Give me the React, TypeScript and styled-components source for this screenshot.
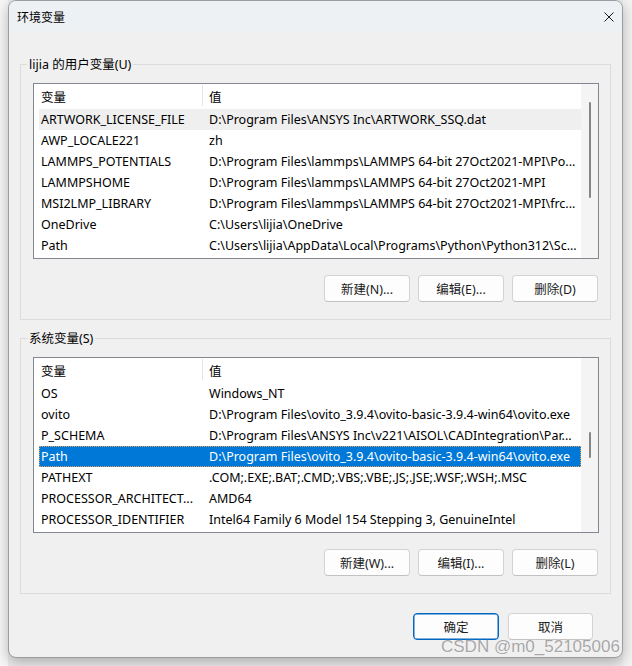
import React from "react";
import styled, { createGlobalStyle } from "styled-components";

const GlobalStyle = createGlobalStyle`
  html, body { margin: 0; padding: 0; }
  body {
    width: 632px;
    height: 666px;
    overflow: hidden;
    background: #ececec;
    font-family: "Noto Sans", "Noto Sans CJK SC", sans-serif;
    font-size: 12.5px;
    color: #000;
  }
  * { box-sizing: border-box; }
`;

const Screen = styled.div`
  position: relative;
  width: 632px;
  height: 666px;
  padding-left: 8px;
  background: linear-gradient(to right, #f7f7f7 0 8px, #ececec 8px 623px, #f3f3f3 623px);
`;

const Dialog = styled.div`
  width: 615px;
  height: 658px;
  display: flex;
  flex-direction: column;
  background: #f0f0f0;
  border: 1px solid #9c9c9c;
  border-radius: 8px;
  overflow: hidden;
  box-shadow: 0 4px 14px rgba(0, 0, 0, 0.28);
`;

const TitleBar = styled.div`
  height: 30px;
  flex: none;
  display: flex;
  align-items: center;
  justify-content: space-between;
  padding: 1px 8px 0 8px;
  background: #eef1f4;
  font-size: 12px;
  color: #000;
`;

const CloseIcon = styled.svg`
  width: 10px;
  height: 10px;
  display: block;
`;

const Body = styled.div`
  flex: 1;
  display: flex;
  flex-direction: column;
  padding: 25px 11px 0 11px;
`;

const Group = styled.fieldset<{ $gap?: number }>`
  margin: ${(p) => p.$gap ?? 0}px 0 0 0;
  padding: 11px 11px 17px 12px;
  border: 1px solid #dcdcdc;
  min-width: 0;
`;

const Legend = styled.legend`
  padding: 1px 2px 0 2px;
  margin-left: -6px;
  line-height: 15px;
  font-size: 12.5px;
  color: #000;
`;

const List = styled.div`
  height: 176px;
  display: flex;
  background: #fff;
  border: 1px solid #828790;
`;

const ListMain = styled.div`
  flex: 1;
  min-width: 0;
  display: flex;
  flex-direction: column;
`;

const Header = styled.div`
  height: 25px;
  flex: none;
  display: grid;
  grid-template-columns: 168px 1fr;
`;

const HeaderCell = styled.div<{ $sep?: boolean }>`
  display: flex;
  align-items: center;
  padding: 1px 0 0 ${(p) => (p.$sep ? 6 : 7)}px;
  margin: 1px 0 3px 0;
  border-left: ${(p) => (p.$sep ? "1px solid #e5e5e5" : "none")};
  white-space: nowrap;
`;

const Row = styled.div<{ $state?: "hover" | "selected" }>`
  height: 21px;
  flex: none;
  margin-left: 5px;
  display: grid;
  grid-template-columns: 163px 1fr;
  background: ${(p) =>
    p.$state === "selected" ? "#0078d7" : p.$state === "hover" ? "#efefef" : "transparent"};
  color: ${(p) => (p.$state === "selected" ? "#fff" : "#000")};
  outline: ${(p) => (p.$state === "selected" ? "1px dotted #e9a25f" : "none")};
  outline-offset: -1px;
`;

const Cell = styled.div<{ $value?: boolean }>`
  padding: 1px 0 0 ${(p) => (p.$value ? 7 : 2)}px;
  white-space: nowrap;
  overflow: hidden;
  line-height: 20px;
`;

const ScrollTrack = styled.div`
  width: 17px;
  flex: none;
  background: #f4f4f4;
  display: flex;
  flex-direction: column;
  align-items: center;
`;

const ScrollThumb = styled.div<{ $top: number; $h: number }>`
  width: 2px;
  margin-top: ${(p) => p.$top}px;
  height: ${(p) => p.$h}px;
  background: #868686;
  border-radius: 1px;
`;

const ButtonRow = styled.div`
  display: flex;
  justify-content: flex-end;
  gap: 8px;
  margin-top: 16px;
  padding-right: 1px;
`;

const Button = styled.button<{ $primary?: boolean; $w?: number }>`
  width: ${(p) => p.$w ?? 86}px;
  height: 27px;
  padding: 0;
  font-family: inherit;
  font-size: 12.5px;
  color: #1b1b1b;
  background: #fdfdfd;
  border: 1px solid ${(p) => (p.$primary ? "#0067c0" : "#d3d3d3")};
  border-bottom-color: ${(p) => (p.$primary ? "#0067c0" : "#c2c2c2")};
  border-radius: 4px;
  box-shadow: ${(p) => (p.$primary ? "inset 0 0 0 0.5px #0067c0" : "none")};
`;

const Footer = styled.div`
  display: flex;
  justify-content: flex-end;
  gap: 9px;
  margin-top: 19px;
  padding-right: 18px;
`;

const Watermark = styled.div`
  position: absolute;
  left: 441px;
  top: 637px;
  font-family: "Liberation Sans", Arial, sans-serif;
  font-size: 17px;
  color: rgba(95, 95, 95, 0.55);
  text-shadow: 0 0 1px rgba(255, 255, 255, 0.8);
  white-space: nowrap;
  pointer-events: none;
`;

type Item = [string, string];

const userVars: Item[] = [
  ["ARTWORK_LICENSE_FILE", "D:\\Program Files\\ANSYS Inc\\ARTWORK_SSQ.dat"],
  ["AWP_LOCALE221", "zh"],
  ["LAMMPS_POTENTIALS", "D:\\Program Files\\lammps\\LAMMPS 64-bit 27Oct2021-MPI\\Po..."],
  ["LAMMPSHOME", "D:\\Program Files\\lammps\\LAMMPS 64-bit 27Oct2021-MPI"],
  ["MSI2LMP_LIBRARY", "D:\\Program Files\\lammps\\LAMMPS 64-bit 27Oct2021-MPI\\frc..."],
  ["OneDrive", "C:\\Users\\lijia\\OneDrive"],
  ["Path", "C:\\Users\\lijia\\AppData\\Local\\Programs\\Python\\Python312\\Sc..."],
];

const sysVars: Item[] = [
  ["OS", "Windows_NT"],
  ["ovito", "D:\\Program Files\\ovito_3.9.4\\ovito-basic-3.9.4-win64\\ovito.exe"],
  ["P_SCHEMA", "D:\\Program Files\\ANSYS Inc\\v221\\AISOL\\CADIntegration\\Par..."],
  ["Path", "D:\\Program Files\\ovito_3.9.4\\ovito-basic-3.9.4-win64\\ovito.exe"],
  ["PATHEXT", ".COM;.EXE;.BAT;.CMD;.VBS;.VBE;.JS;.JSE;.WSF;.WSH;.MSC"],
  ["PROCESSOR_ARCHITECT...", "AMD64"],
  ["PROCESSOR_IDENTIFIER", "Intel64 Family 6 Model 154 Stepping 3, GenuineIntel"],
];

function VarList({
  items,
  hover,
  selected,
  thumbTop,
  thumbH,
}: {
  items: Item[];
  hover?: number;
  selected?: number;
  thumbTop: number;
  thumbH: number;
}) {
  return (
    <List>
      <ListMain>
        <Header>
          <HeaderCell>变量</HeaderCell>
          <HeaderCell $sep>值</HeaderCell>
        </Header>
        {items.map(([k, v], i) => (
          <Row key={k + i} $state={i === selected ? "selected" : i === hover ? "hover" : undefined}>
            <Cell>{k}</Cell>
            <Cell $value>{v}</Cell>
          </Row>
        ))}
      </ListMain>
      <ScrollTrack>
        <ScrollThumb $top={thumbTop} $h={thumbH} />
      </ScrollTrack>
    </List>
  );
}

export default function App() {
  return (
    <Screen>
      <GlobalStyle />
      <Dialog>
        <TitleBar>
          <span>环境变量</span>
          <CloseIcon viewBox="0 0 10 10">
            <path d="M0.5 0.5 L9.5 9.5 M9.5 0.5 L0.5 9.5" stroke="#1a1a1a" strokeWidth="1" fill="none" />
          </CloseIcon>
        </TitleBar>
        <Body>
          <Group>
            <Legend>lijia 的用户变量(U)</Legend>
            <VarList items={userVars} hover={0} thumbTop={18} thumbH={96} />
            <ButtonRow>
              <Button>新建(N)...</Button>
              <Button>编辑(E)...</Button>
              <Button>删除(D)</Button>
            </ButtonRow>
          </Group>
          <Group $gap={10}>
            <Legend>系统变量(S)</Legend>
            <VarList items={sysVars} selected={3} thumbTop={74} thumbH={26} />
            <ButtonRow>
              <Button>新建(W)...</Button>
              <Button>编辑(I)...</Button>
              <Button>删除(L)</Button>
            </ButtonRow>
          </Group>
          <Footer>
            <Button $primary>确定</Button>
            <Button $w={85}>取消</Button>
          </Footer>
        </Body>
      </Dialog>
      <Watermark>CSDN @m0_52105006</Watermark>
    </Screen>
  );
}
